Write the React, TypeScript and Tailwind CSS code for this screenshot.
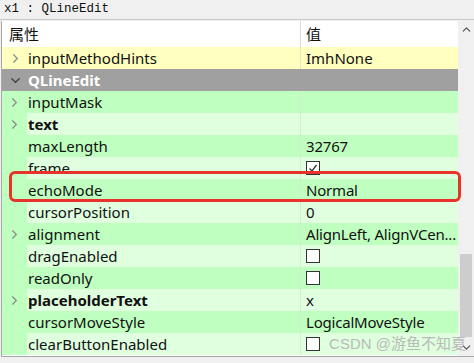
import { ChevronRight, ChevronDown, ChevronUp } from 'lucide-react'

type Row = {
    name: string
    value?: string
    kind?: 'text' | 'check' | 'checked'
    expand?: boolean
    bold?: boolean
    light?: boolean
}

const ROWS: Row[] = [
    { name: 'inputMask', expand: true },
    { name: 'text', expand: true, bold: true, light: true },
    { name: 'maxLength', value: '32767' },
    { name: 'frame', kind: 'checked', light: true },
    { name: 'echoMode', value: 'Normal' },
    { name: 'cursorPosition', value: '0', light: true },
    { name: 'alignment', value: 'AlignLeft, AlignVCen...', expand: true },
    { name: 'dragEnabled', kind: 'check', light: true },
    { name: 'readOnly', kind: 'check' },
    { name: 'placeholderText', value: 'x', expand: true, bold: true, light: true },
    { name: 'cursorMoveStyle', value: 'LogicalMoveStyle' },
    { name: 'clearButtonEnabled', kind: 'check', light: true },
]

function Box({ checked }: { checked?: boolean }) {
    return (
        <div className="w-[14px] h-[14px] border border-[#333] bg-white flex items-center justify-center">
            {checked && (
                <svg width="10" height="10" viewBox="0 0 10 10">
                    <path d="M1.5 5.5 L4 8 L8.5 2" fill="none" stroke="#333" strokeWidth="1.3" />
                </svg>
            )}
        </div>
    )
}

export default function App() {
    return (
        <div className="w-[474px] h-[363px] bg-[#f0f0f0] flex flex-col overflow-hidden text-[15px] text-[#111] font-['Noto_Sans','Noto_Sans_CJK_SC',sans-serif]">
            {/* object name bar */}
            <div className="h-[20px] flex items-center pl-[4px] border-b border-[#c8c8c8] font-['Liberation_Mono',monospace] text-[12.5px] text-[#111]">
                x1 : QLineEdit
            </div>

            <div className="relative flex mt-[1px] h-[336px] border-l border-b border-[#a8a8a8] ml-[1px]">
                <div className="w-[456px] flex flex-col bg-white">
                    {/* header */}
                    <div className="h-[26px] flex items-center">
                        <div className="w-[298px] pl-[7px] font-['Noto_Sans_CJK_SC',sans-serif] text-[15px]">属性</div>
                        <div className="self-stretch border-l border-[#dcdcdc] flex items-center pl-[5px] font-['Noto_Sans_CJK_SC',sans-serif] text-[15px]">值</div>
                    </div>

                    {/* inherited group tail */}
                    <div className="h-[22px] flex items-center bg-[#ffffbf]">
                        <div className="w-[26px] flex justify-center text-[#888]"><ChevronRight size={15} strokeWidth={1.8} /></div>
                        <div className="w-[272px]">inputMethodHints</div>
                        <div className="self-stretch border-l border-[#e6e6c8] flex items-center pl-[5px] flex-1">ImhNone</div>
                    </div>

                    {/* class group header */}
                    <div className="h-[22px] flex items-center bg-[#a0a0a0] text-white font-bold">
                        <div className="w-[26px] flex justify-center text-[#333]"><ChevronDown size={15} strokeWidth={2} /></div>
                        <div>QLineEdit</div>
                    </div>

                    {ROWS.map(r => (
                        <div key={r.name} className="h-[22px] flex items-stretch">
                            <div className="w-[25px] bg-[#bfffbf] flex items-center justify-center text-[#888]">
                                {r.expand && <ChevronRight size={15} strokeWidth={1.8} />}
                            </div>
                            <div className={`w-[273px] pl-[1px] flex items-center ${r.light ? 'bg-[#dfffdf]' : 'bg-[#bfffbf]'} ${r.bold ? 'font-bold' : ''}`}>
                                {r.name}
                            </div>
                            <div className={`flex-1 border-l border-[#d4ecd4] flex items-center pl-[5px] whitespace-nowrap overflow-hidden tracking-[-0.2px] ${r.light ? 'bg-[#dfffdf]' : 'bg-[#bfffbf]'}`}>
                                {r.kind === 'check' && <Box />}
                                {r.kind === 'checked' && <Box checked />}
                                {r.value}
                            </div>
                        </div>
                    ))}
                </div>

                {/* scrollbar */}
                <div className="flex-1 bg-[#f0f0f0] flex flex-col items-center">
                    <div className="h-[17px] flex items-center justify-center text-[#555]"><ChevronUp size={13} strokeWidth={2.2} /></div>
                    <div className="flex-1 w-full px-[2px] flex flex-col">
                        <div className="h-[216px]" />
                        <div className="h-[83px] bg-[#cdcdcd]" />
                    </div>
                    <div className="h-[17px] flex items-center justify-center text-[#555]"><ChevronDown size={13} strokeWidth={2.2} /></div>
                </div>

                {/* highlight marker */}
                <div className="absolute left-[7px] top-[150px] w-[452px] h-[31px] border-[3px] border-[#e8322c] rounded-[6px]" />

                {/* watermark */}
                <div className="absolute right-[8px] bottom-[1px] text-[15px] text-[#b4b4b4] font-['Liberation_Sans','Noto_Sans_CJK_SC',sans-serif] opacity-90">
                    CSDN @游鱼不知夏
                </div>
            </div>
        </div>
    )
}
